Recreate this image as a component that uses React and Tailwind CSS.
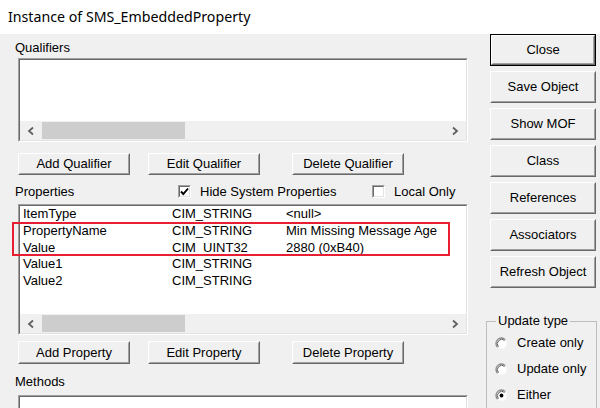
import React from 'react';

const font = { fontFamily: '"Liberation Sans", Arial, sans-serif' };

const RaisedButton = ({ children, width = 'w-[112px]', height = 'h-[23px]', isDefault = false }) => {
  const inner = (
    <div className="h-full border border-t-[#ffffff] border-l-[#ffffff] border-b-[#696969] border-r-[#696969] bg-[#f0f0f0]">
      <div className="h-full flex items-center justify-center border border-t-[#f0f0f0] border-l-[#f0f0f0] border-b-[#a0a0a0] border-r-[#a0a0a0] text-[13px] text-black">
        {children}
      </div>
    </div>
  );
  if (isDefault) {
    return <div className={`${width} ${height} border border-black`}>{inner}</div>;
  }
  return <div className={`${width} ${height}`}>{inner}</div>;
};

const Chevron = ({ dir }) => (
  <svg width="8" height="10" viewBox="0 0 8 10">
    {dir === 'left' ? (
      <polyline points="6,1.5 2,5 6,8.5" fill="none" stroke="#606060" strokeWidth="1.8" />
    ) : (
      <polyline points="2,1.5 6,5 2,8.5" fill="none" stroke="#606060" strokeWidth="1.8" />
    )}
  </svg>
);

const HScroll = () => (
  <div className="h-[19px] flex items-stretch bg-[#f0f0f0]">
    <div className="w-[22px] flex items-center justify-center">
      <Chevron dir="left" />
    </div>
    <div className="flex-1 flex items-stretch py-[1px]">
      <div className="w-[143px] bg-[#cdcdcd]" />
    </div>
    <div className="w-[22px] flex items-center justify-center">
      <Chevron dir="right" />
    </div>
  </div>
);

const SunkenBox = ({ className = '', children }) => (
  <div className={`border border-t-[#a0a0a0] border-l-[#a0a0a0] border-b-[#ffffff] border-r-[#ffffff] ${className}`}>
    <div className="h-full border border-t-[#696969] border-l-[#696969] border-b-[#e3e3e3] border-r-[#e3e3e3] bg-white flex flex-col">
      {children}
    </div>
  </div>
);

const Checkbox = ({ checked }) => (
  <div className="w-[13px] h-[13px] border border-t-[#a0a0a0] border-l-[#a0a0a0] border-b-[#ffffff] border-r-[#ffffff]">
    <div className="w-full h-full border border-t-[#696969] border-l-[#696969] border-b-[#e3e3e3] border-r-[#e3e3e3] bg-white flex items-center justify-center">
      {checked && (
        <svg width="9" height="9" viewBox="0 0 9 9">
          <polyline points="1,4.5 3.3,7 8,1.5" fill="none" stroke="#000" strokeWidth="1.9" />
        </svg>
      )}
    </div>
  </div>
);

const Radio = ({ checked }) => (
  <svg width="13" height="13" viewBox="0 0 13 13">
    <circle cx="6.5" cy="6.5" r="5.5" fill="#fff" />
    <path d="M10.4 2.6 A5.5 5.5 0 0 0 2.6 10.4" fill="none" stroke="#8a8a8a" strokeWidth="1.3" />
    <path d="M9.6 3.4 A4.4 4.4 0 0 0 3.4 9.6" fill="none" stroke="#5a5a5a" strokeWidth="1" />
    <path d="M2.6 10.4 A5.5 5.5 0 0 0 10.4 2.6" fill="none" stroke="#f4f4f4" strokeWidth="1" />
    {checked && <circle cx="6.5" cy="6.5" r="1.9" fill="#000" />}
  </svg>
);

const properties = [
  { name: 'ItemType', type: 'CIM_STRING', value: '<null>' },
  { name: 'PropertyName', type: 'CIM_STRING', value: 'Min Missing Message Age' },
  { name: 'Value', type: 'CIM_UINT32', value: '2880 (0xB40)' },
  { name: 'Value1', type: 'CIM_STRING', value: '' },
  { name: 'Value2', type: 'CIM_STRING', value: '' },
];

const sideButtons = ['Close', 'Save Object', 'Show MOF', 'Class', 'References', 'Associators', 'Refresh Object'];

export default function App() {
  return (
    <div className="w-[600px] h-[408px] overflow-hidden bg-[#f0f0f0] flex flex-col" style={font}>
      {/* Title bar */}
      <div className="h-[34px] bg-white flex items-center pl-[8px] shrink-0">
        <span className="text-[14.2px] text-black" style={{ fontFamily: '"Noto Sans", "Open Sans", sans-serif' }}>
          Instance of SMS_EmbeddedProperty
        </span>
      </div>

      <div className="flex flex-1">
        {/* Left column */}
        <div className="w-[468px] pl-[15px] flex flex-col text-[13px] text-black">
          <div className="mt-[6px] h-[15px] leading-[15px]">Qualifiers</div>
          <SunkenBox className="ml-[3px] mt-[3px] h-[84px] w-[450px]">
            <div className="flex-1" />
            <HScroll />
          </SunkenBox>

          <div className="ml-[3px] mt-[11px] flex gap-[18px]">
            <RaisedButton height="h-[22px]">Add Qualifier</RaisedButton>
            <RaisedButton height="h-[22px]">Edit Qualifier</RaisedButton>
            <div className="ml-[14px]">
              <RaisedButton height="h-[22px]">Delete Qualifier</RaisedButton>
            </div>
          </div>

          <div className="mt-[9px] h-[14px] flex items-center">
            <div className="w-[163px] leading-[15px]">Properties</div>
            <div className="w-[194px] flex items-center">
              <Checkbox checked />
              <span className="ml-[9px] leading-[15px]">Hide System Properties</span>
            </div>
            <Checkbox />
            <span className="ml-[9px] leading-[15px]">Local Only</span>
          </div>

          <div className="relative ml-[3px] mt-[6px]">
            <SunkenBox className="h-[131px] w-[450px]">
              <div className="flex-1 pl-[3px]">
                {properties.map((p) => (
                  <div key={p.name} className="flex h-[16.75px] leading-[16.75px] whitespace-nowrap">
                    <span className="w-[149px]">{p.name}</span>
                    <span className="w-[114px]">{p.type}</span>
                    <span>{p.value}</span>
                  </div>
                ))}
              </div>
              <HScroll />
            </SunkenBox>
            {/* highlight overlay */}
            <div className="absolute left-[-6px] top-[18px] w-[438px] h-[34px] border-2 border-[#e81f33] pointer-events-none" />
          </div>

          <div className="ml-[3px] mt-[6px] flex gap-[18px]">
            <RaisedButton>Add Property</RaisedButton>
            <RaisedButton>Edit Property</RaisedButton>
            <div className="ml-[14px]">
              <RaisedButton>Delete Property</RaisedButton>
            </div>
          </div>

          <div className="mt-[10px] h-[15px] leading-[15px]">Methods</div>
          <SunkenBox className="ml-[3px] mt-[6px] h-[60px] w-[450px]">
            <div className="flex-1" />
          </SunkenBox>
        </div>

        {/* Right column */}
        <div className="flex-1 flex flex-col text-[13px]">
          <div className="ml-[22px] flex flex-col gap-[5px]">
            {sideButtons.map((b, i) => (
              <RaisedButton key={b} width="w-[106px]" height="h-[32px]" isDefault={i === 0}>
                {b}
              </RaisedButton>
            ))}
          </div>

          <div className="relative ml-[18px] mt-[33px] w-[111px] h-[100px] border border-[#bdbdbd]">
            <div className="absolute left-[9px] top-[-9px] px-[2px] bg-[#f0f0f0] leading-[16px] text-black">
              Update type
            </div>
            <div className="pt-[13px] pl-[8px] flex flex-col gap-[10px]">
              {[
                { label: 'Create only', checked: false },
                { label: 'Update only', checked: false },
                { label: 'Either', checked: true },
              ].map((r) => (
                <div key={r.label} className="flex items-center h-[16px]">
                  <Radio checked={r.checked} />
                  <span className="ml-[9px] text-black">{r.label}</span>
                </div>
              ))}
            </div>
          </div>
        </div>
      </div>
    </div>
  );
}
